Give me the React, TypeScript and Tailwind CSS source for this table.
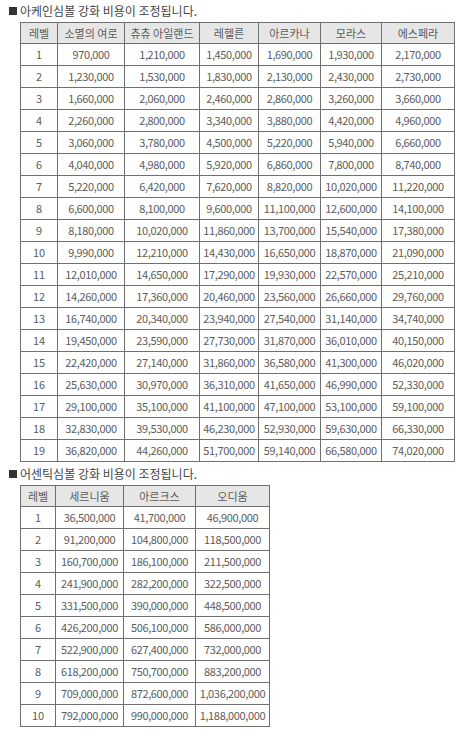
const arcane = {
  title: "아케인심볼 강화 비용이 조정됩니다.",
  headers: ["레벨", "소멸의 여로", "츄츄 아일랜드", "레헬른", "아르카나", "모라스", "에스페라"],
  widths: [37, 67, 75, 59, 62, 61, 73],
  rows: [
    ["970,000", "1,210,000", "1,450,000", "1,690,000", "1,930,000", "2,170,000"],
    ["1,230,000", "1,530,000", "1,830,000", "2,130,000", "2,430,000", "2,730,000"],
    ["1,660,000", "2,060,000", "2,460,000", "2,860,000", "3,260,000", "3,660,000"],
    ["2,260,000", "2,800,000", "3,340,000", "3,880,000", "4,420,000", "4,960,000"],
    ["3,060,000", "3,780,000", "4,500,000", "5,220,000", "5,940,000", "6,660,000"],
    ["4,040,000", "4,980,000", "5,920,000", "6,860,000", "7,800,000", "8,740,000"],
    ["5,220,000", "6,420,000", "7,620,000", "8,820,000", "10,020,000", "11,220,000"],
    ["6,600,000", "8,100,000", "9,600,000", "11,100,000", "12,600,000", "14,100,000"],
    ["8,180,000", "10,020,000", "11,860,000", "13,700,000", "15,540,000", "17,380,000"],
    ["9,990,000", "12,210,000", "14,430,000", "16,650,000", "18,870,000", "21,090,000"],
    ["12,010,000", "14,650,000", "17,290,000", "19,930,000", "22,570,000", "25,210,000"],
    ["14,260,000", "17,360,000", "20,460,000", "23,560,000", "26,660,000", "29,760,000"],
    ["16,740,000", "20,340,000", "23,940,000", "27,540,000", "31,140,000", "34,740,000"],
    ["19,450,000", "23,590,000", "27,730,000", "31,870,000", "36,010,000", "40,150,000"],
    ["22,420,000", "27,140,000", "31,860,000", "36,580,000", "41,300,000", "46,020,000"],
    ["25,630,000", "30,970,000", "36,310,000", "41,650,000", "46,990,000", "52,330,000"],
    ["29,100,000", "35,100,000", "41,100,000", "47,100,000", "53,100,000", "59,100,000"],
    ["32,830,000", "39,530,000", "46,230,000", "52,930,000", "59,630,000", "66,330,000"],
    ["36,820,000", "44,260,000", "51,700,000", "59,140,000", "66,580,000", "74,020,000"],
  ],
}

const authentic = {
  title: "어센틱심볼 강화 비용이 조정됩니다.",
  headers: ["레벨", "세르니움", "아르크스", "오디움"],
  widths: [35, 68, 72, 74],
  rows: [
    ["36,500,000", "41,700,000", "46,900,000"],
    ["91,200,000", "104,800,000", "118,500,000"],
    ["160,700,000", "186,100,000", "211,500,000"],
    ["241,900,000", "282,200,000", "322,500,000"],
    ["331,500,000", "390,000,000", "448,500,000"],
    ["426,200,000", "506,100,000", "586,000,000"],
    ["522,900,000", "627,400,000", "732,000,000"],
    ["618,200,000", "750,700,000", "883,200,000"],
    ["709,000,000", "872,600,000", "1,036,200,000"],
    ["792,000,000", "990,000,000", "1,188,000,000"],
  ],
}

type CostTable = typeof arcane

function Section({ data }: { data: CostTable }) {
  const total = data.widths.reduce((a, b) => a + b, 0)
  return (
    <div>
      <div className="flex h-[22px] items-center gap-[3px] pl-[9px] text-[12px] text-[#444]">
        <span className="inline-block h-[8px] w-[8px] bg-[#333]" />
        <span>{data.title}</span>
      </div>
      <table
        className="ml-[20px] table-fixed border-collapse text-center text-[11px] text-[#5c5c5c]"
        style={{ width: total }}
      >
        <colgroup>
          {data.widths.map((w, i) => (
            <col key={i} style={{ width: w }} />
          ))}
        </colgroup>
        <thead>
          <tr className="h-[21px] bg-[#e6e6e6]">
            {data.headers.map((h) => (
              <th key={h} className="border border-[#707070] p-0 font-normal text-[#5c5c5c]">
                {h}
              </th>
            ))}
          </tr>
        </thead>
        <tbody>
          {data.rows.map((row, i) => (
            <tr key={i} className="h-[22px]">
              <td className="border border-[#707070] p-0">{i + 1}</td>
              {row.map((v, j) => (
                <td key={j} className="border border-[#707070] p-0 tracking-[-0.35px]">
                  {v}
                </td>
              ))}
            </tr>
          ))}
        </tbody>
      </table>
    </div>
  )
}

export default function App() {
  return (
    <div
      className="h-[738px] w-[474px] bg-white"
      style={{ fontFamily: '"Noto Sans CJK KR", "Noto Sans", sans-serif' }}
    >
      <Section data={arcane} />
      <div className="h-[1px]" />
      <Section data={authentic} />
    </div>
  )
}
